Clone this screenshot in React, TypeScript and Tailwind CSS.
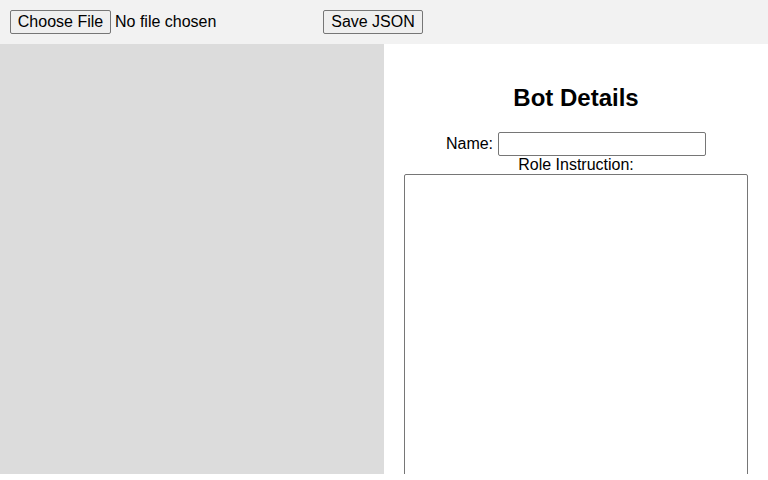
import React from "react";

export default function App() {
  return (
    <div className="w-[768px] h-[480px] bg-white font-['Liberation_Sans',Arial,sans-serif] text-[16px] text-black overflow-hidden">
      <div className="h-[44px] bg-[#f2f2f2] flex items-center px-[10px]">
        <div className="w-[313px] flex items-center">
          <button className="w-[101px] h-[24px] border border-[#767676] rounded-[2px] bg-[#efefef] text-center leading-[22px]">
            Choose File
          </button>
          <span className="ml-[4px] leading-[22px]">No file chosen</span>
        </div>
        <button className="w-[100px] h-[24px] border border-[#767676] rounded-[2px] bg-[#efefef] text-center leading-[22px]">
          Save JSON
        </button>
      </div>
      <div className="flex h-[430px] overflow-hidden">
        <div className="w-[384px] bg-[#dcdcdc]" />
        <div className="w-[384px] px-[20px] pt-[20px] bg-white">
          <h2 className="text-[24px] font-bold text-center leading-[28px] my-[20px]">Bot Details</h2>
          <div className="flex justify-center items-center h-[24px]">
            <span className="leading-[18px]">Name:</span>
            <input
              type="text"
              className="ml-[5px] w-[208px] h-[24px] border border-[#767676] rounded-[2px] bg-white px-[2px] outline-none"
            />
          </div>
          <div className="text-center leading-[18px]">Role Instruction:</div>
          <textarea className="block w-full h-[400px] border border-[#767676] rounded-[2px] bg-white resize-none outline-none" />
        </div>
      </div>
    </div>
  );
}
